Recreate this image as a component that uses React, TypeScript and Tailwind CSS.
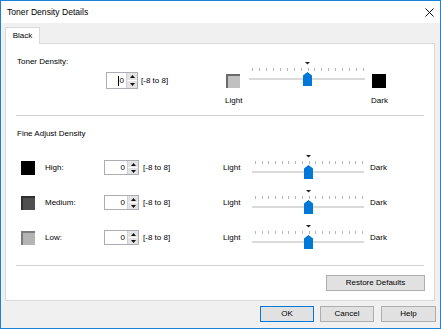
import React from "react";

const Slider = ({ w }: { w: number }) => {
  const center = w / 2 + 0.5;
  const first = 4;
  const last = w - 3;
  const ticks = Array.from({ length: 17 }, (_, i) => Math.round(first + (i * (last - first)) / 16) + 0.5);
  return (
    <svg width={w} height={26} viewBox={`0 0 ${w} 26`} className="block">
      <path d={`M${center - 2.5} 1h5l-2.5 2.5z`} fill="#222" />
      {ticks.map((x, i) => (
        <line key={i} x1={x} x2={x} y1={7} y2={10} stroke="#b8b8b8" strokeWidth={1} />
      ))}
      <rect x={1} y={17} width={w - 2} height={2} fill="#dadada" />
      <path
        d={`M${center - 4.5} 14.5 L${center} 11 L${center + 4.5} 14.5 V25 H${center - 4.5} Z`}
        fill="#0078d7"
      />
    </svg>
  );
};

const Arrow = ({ up }: { up?: boolean }) => (
  <svg width="5" height="3" viewBox="0 0 5 3" className="block">
    <path d={up ? "M0 3h5L2.5 0z" : "M0 0h5L2.5 3z"} fill="#111" />
  </svg>
);

const Spin = ({ big }: { big?: boolean }) => (
  <div
    className={
      big
        ? "flex h-[17px] w-[32px] border border-[#abadb3] bg-white"
        : "flex h-[15px] w-[35px] border border-[#abadb3] bg-white"
    }
  >
    <div className="flex flex-1 items-center justify-end pr-[2px] text-[8px] leading-[10px]">
      {big && <span className="mr-[1px] inline-block h-[10px] w-px bg-black" />}
      0
    </div>
    <div className="flex w-[11px] flex-col gap-px border-l border-[#d0d0d0] bg-white">
      <div className="flex flex-1 items-center justify-center bg-[#e3e3e3]">
        <Arrow up />
      </div>
      <div className="flex flex-1 items-center justify-center bg-[#e3e3e3]">
        <Arrow />
      </div>
    </div>
  </div>
);

const Swatch = ({ fill }: { fill: string }) => (
  <div className="h-[14px] w-[14px] border-l-2 border-t-2 border-[#6a6a6a]" style={{ background: fill }} />
);

const rows = [
  { name: "High:", fill: "#000000", edge: "border-[#000000]" },
  { name: "Medium:", fill: "#4f4f4f", edge: "border-[#2e2e2e]" },
  { name: "Low:", fill: "#b4b4b4", edge: "border-[#7c7c7c]" },
];

export default function App() {
  return (
    <div className="flex h-[329px] w-[441px] flex-col border border-[#1883d7] bg-[#f0f0f0] font-[Liberation_Sans,Arial,sans-serif] text-[8px] leading-[10px] text-black">
      {/* title bar */}
      <div className="flex h-[22px] items-center justify-between bg-white pl-[6px] pr-[6px]">
        <span className="text-[8.6px]">Toner Density Details</span>
        <svg width="9" height="9" viewBox="0 0 9 9">
          <path d="M0.5 0.5l8 8M8.5 0.5l-8 8" stroke="#111" strokeWidth="1" />
        </svg>
      </div>

      {/* tabs */}
      <div className="flex h-[20px] items-end pl-[4px] pt-[4px]">
        <div className="relative z-10 -mb-px flex h-[17px] w-[35px] items-center justify-center border border-b-0 border-[#d9d9d9] bg-white">
          Black
        </div>
      </div>

      {/* panel */}
      <div className="ml-[4px] flex h-[258px] w-[430px] flex-col border border-[#d9d9d9] bg-white">
        {/* toner density */}
        <div className="mt-[13px] flex h-[58px] pl-[11px]">
          <div className="flex w-[208px] flex-col">
            <span>Toner Density:</span>
            <div className="ml-[89px] mt-[5px] flex items-center gap-[3px]">
              <Spin big />
              <span>[-8 to 8]</span>
            </div>
          </div>
          <div className="mt-[4px] flex flex-col">
            <div className="flex items-start">
              <div className="ml-px mt-[13px]">
                <Swatch fill="#c0c0c0" />
              </div>
              <div className="ml-[8px]">
                <Slider w={118} />
              </div>
              <div className="ml-[6px] mt-[13px] h-[14px] w-[14px] bg-black" />
            </div>
            <div className="mt-[8px] flex">
              <span className="w-[146px]">Light</span>
              <span>Dark</span>
            </div>
          </div>
        </div>

        <div className="mx-[10px] border-t border-[#d0d0d0]" />

        {/* fine adjust */}
        <div className="ml-[11px] mt-[13px]">Fine Adjust Density</div>
        <div className="mt-[11px] flex flex-col">
          {rows.map((r) => (
            <div key={r.name} className="flex h-[35px] items-center pl-[15px]">
              <div
                className={`h-[14px] w-[14px] border-l-2 border-t-2 ${r.edge}`}
                style={{ background: r.fill }}
              />
              <span className="ml-[10px] w-[59px]">{r.name}</span>
              <Spin />
              <span className="w-[84px] pl-[4px]">[-8 to 8]</span>
              <span className="w-[28px]">Light</span>
              <div className="-mt-[2px]">
                <Slider w={114} />
              </div>
              <span className="ml-[5px]">Dark</span>
            </div>
          ))}
        </div>

        <div className="mx-[10px] mt-[10px] border-t border-[#d0d0d0]" />

        <div className="mr-[9px] mt-[9px] flex justify-end">
          <button className="h-[16px] w-[99px] border border-[#adadad] bg-[#e1e1e1] text-[8px] leading-[10px]">
            Restore Defaults
          </button>
        </div>
      </div>

      {/* footer */}
      <div className="flex flex-1 items-start justify-end pr-[4px] pt-[5px]">
        <button className="h-[16px] w-[54px] border border-[#0078d7] bg-[#e1e1e1] text-[8px] leading-[10px]">
          OK
        </button>
        <button className="ml-[6px] h-[16px] w-[54px] border border-[#adadad] bg-[#e1e1e1] text-[8px] leading-[10px]">
          Cancel
        </button>
        <button className="ml-[7px] h-[16px] w-[55px] border border-[#adadad] bg-[#e1e1e1] text-[8px] leading-[10px]">
          Help
        </button>
      </div>
    </div>
  );
}
